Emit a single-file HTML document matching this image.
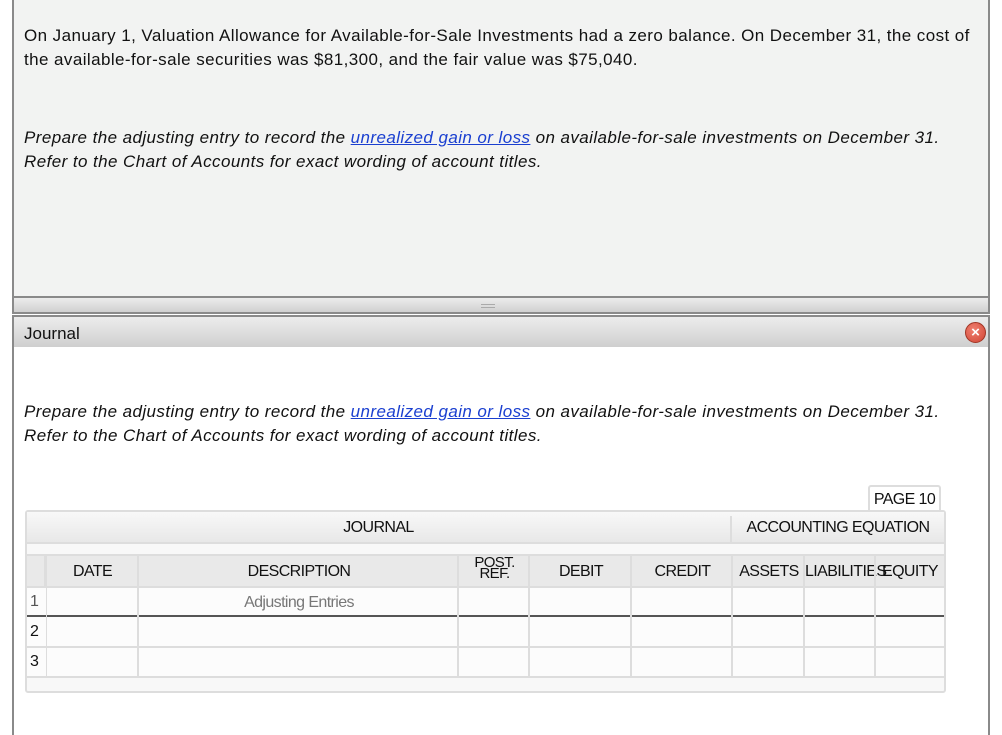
<!DOCTYPE html>
<html><head><meta charset="utf-8"><style>
*{margin:0;padding:0;box-sizing:border-box}
body{width:1002px;height:716px;background:#fff;position:relative;overflow:hidden;font-family:"Liberation Sans",Arial,sans-serif;color:#111}
.top{position:absolute;left:12px;top:0;width:978px;height:298px;background:#f2f3f2;border-left:2px solid #8a8a8a;border-right:2px solid #8a8a8a;border-bottom:2px solid #8a8a8a}
.p{position:absolute;left:24px;font-size:17px;letter-spacing:0.42px;line-height:24px;white-space:nowrap}
.i{font-style:italic}
a{color:#1a3fd0;text-decoration:underline}
.split{position:absolute;left:12px;top:298px;width:978px;height:16px;background:linear-gradient(#ececec,#d0d0d0);border:2px solid #8a8a8a;border-top:none}
.split .g{position:absolute;left:467px;top:6px;width:14px;height:4px;border-top:1px solid #aaa;border-bottom:1px solid #aaa}
.jp{position:absolute;left:12px;top:315px;width:978px;height:420px;border-left:2px solid #8a8a8a;border-right:2px solid #8a8a8a;border-top:2px solid #8a8a8a}
.jh{position:absolute;left:0;top:0;width:974px;height:30px;background:linear-gradient(#ececec,#cfcfcf);font-size:17px;line-height:34px;padding-left:10px}
.x{position:absolute;right:2px;top:5px;width:21px;height:21px;border-radius:50%;background:radial-gradient(circle at 40% 35%,#f08070,#d04535);color:#fff;font-size:15px;line-height:19px;text-align:center;font-weight:bold;border:1px solid #a03525}
.t{font-family:"Liberation Sans",sans-serif;font-size:16px;letter-spacing:-0.6px}
.box{position:absolute;left:25px;top:510px;width:921px;height:183px;border:2px solid #ddd;border-radius:3px;background:#f8f8f8}
.c{position:absolute;text-align:center;color:#111;white-space:nowrap}
.hl{position:absolute;background:#ddd}
</style></head><body>
<div class="top"></div>
<div class="p" style="top:24px">On January 1, Valuation Allowance for Available-for-Sale Investments had a zero balance. On December 31, the cost of<br>the available-for-sale securities was $81,300, and the fair value was $75,040.</div>
<div class="p i" style="top:126px">Prepare the adjusting entry to record the <a>unrealized gain or loss</a> on available-for-sale investments on December 31.<br>Refer to the Chart of Accounts for exact wording of account titles.</div>
<div class="split"><div class="g"></div></div>
<div class="jp"><div class="jh">Journal<div class="x">×</div></div></div>
<div class="p i" style="top:400px">Prepare the adjusting entry to record the <a>unrealized gain or loss</a> on available-for-sale investments on December 31.<br>Refer to the Chart of Accounts for exact wording of account titles.</div>
<div class="t" style="position:absolute;left:868px;top:485px;width:73px;height:26px;border:2px solid #ddd;border-bottom:none;border-radius:3px 3px 0 0;text-align:center;line-height:26px;background:#fff;white-space:nowrap">PAGE 10</div>
<div class="box t">
 <div style="position:absolute;left:0;top:0;width:917px;height:32px;background:linear-gradient(#f8f8f8,#e8e8e8);border-bottom:2px solid #ddd"></div>
 <div class="c" style="left:0;width:703px;top:7px">JOURNAL</div>
 <div class="hl" style="left:703px;top:4px;width:2px;height:26px"></div>
 <div class="c" style="left:705px;width:212px;top:7px">ACCOUNTING EQUATION</div>
 <div style="position:absolute;left:0;top:42px;width:917px;height:33px;background:#e9e9e9;border-top:2px solid #ddd"></div>
 <div style="position:absolute;left:17px;top:42px;width:2px;height:124px;background:#ddd"></div>
 <div class="c" style="left:19px;width:93px;top:51px">DATE</div>
 <div class="c" style="left:112px;width:320px;top:51px">DESCRIPTION</div>
 <div class="c" style="left:432px;width:71px;top:42px;line-height:11px;font-size:15px;padding-top:3px">POST.<br>REF.</div>
 <div class="c" style="left:503px;width:102px;top:51px">DEBIT</div>
 <div class="c" style="left:605px;width:101px;top:51px">CREDIT</div>
 <div class="c" style="left:706px;width:72px;top:51px">ASSETS</div>
 <div class="c" style="left:778px;width:71px;top:51px">LIABILITIES</div>
 <div class="c" style="left:849px;width:68px;top:51px">EQUITY</div>
 <div style="position:absolute;left:0;top:75px;width:917px;height:90px;background:#fcfcfc"></div>
 <div class="hl" style="left:0;top:74px;width:917px;height:2px"></div>
 <div class="hl" style="left:0;top:103px;width:917px;height:2px;background:#555"></div>
 <div class="hl" style="left:0;top:134px;width:917px;height:2px"></div>
 <div class="hl" style="left:0;top:164px;width:917px;height:2px"></div>
 <div class="hl" style="left:19px;top:42px;width:1px;height:124px"></div>
 <div class="hl" style="left:110px;top:42px;width:2px;height:124px"></div>
 <div class="hl" style="left:430px;top:42px;width:2px;height:124px"></div>
 <div class="hl" style="left:501px;top:42px;width:2px;height:124px"></div>
 <div class="hl" style="left:603px;top:42px;width:2px;height:124px"></div>
 <div class="hl" style="left:704px;top:42px;width:2px;height:124px"></div>
 <div class="hl" style="left:776px;top:42px;width:2px;height:124px"></div>
 <div class="hl" style="left:847px;top:42px;width:2px;height:124px"></div>
 <div style="position:absolute;left:3px;top:81px;color:#555;font-size:16px">1</div>
 <div style="position:absolute;left:3px;top:111px;font-size:16px">2</div>
 <div style="position:absolute;left:3px;top:141px;font-size:16px">3</div>
 <div class="c" style="left:112px;width:320px;top:82px;color:#777;font-size:16px">Adjusting Entries</div>
</div>
</body></html>
